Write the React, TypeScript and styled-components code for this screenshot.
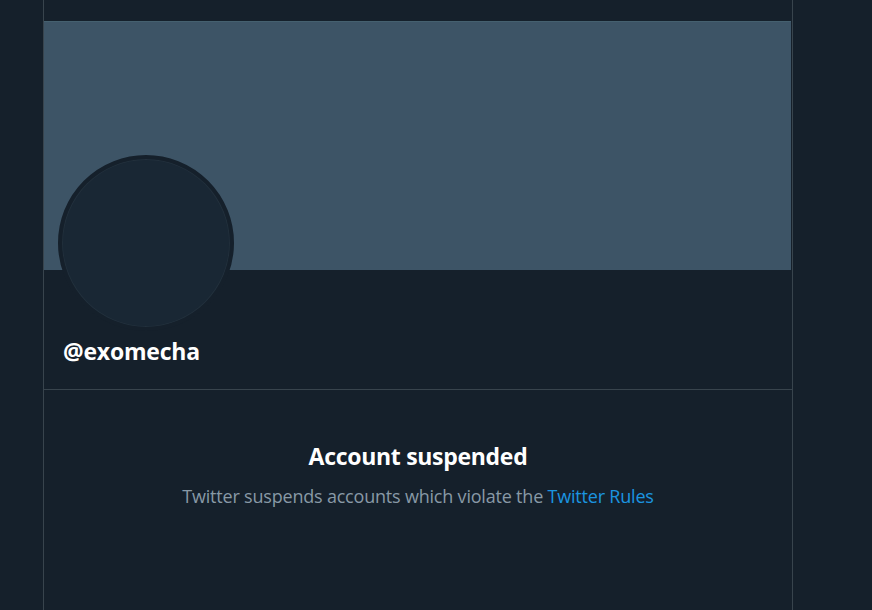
import styled, { createGlobalStyle } from 'styled-components'

const GlobalStyle = createGlobalStyle`
  html, body {
    margin: 0;
    padding: 0;
    height: 100%;
    background: #15202b;
  }
  #root {
    height: 100%;
  }
`

const Page = styled.div`
  height: 100vh;
  overflow: hidden;
  background: #15202b;
  font-family: 'Open Sans', 'Noto Sans', sans-serif;
  color: #fff;
`

const Column = styled.main`
  box-sizing: border-box;
  margin-left: 43px;
  width: 750px;
  height: 100%;
  padding-top: 21px;
  border-left: 1px solid #38444d;
  border-right: 1px solid #38444d;
  display: flex;
  flex-direction: column;
`

const Banner = styled.div`
  height: 249px;
  margin-right: 1px;
  background: #3d5466;
  border-top: 1px solid #45606f;
  box-sizing: border-box;
`

const ProfileHeader = styled.section`
  display: flex;
  flex-direction: column;
  align-items: flex-start;
  padding: 0 14px 23px;
  border-bottom: 1px solid #38444d;
`

const Avatar = styled.div<{ size: number }>`
  box-sizing: border-box;
  width: ${(p) => p.size}px;
  height: ${(p) => p.size}px;
  margin-top: -115px;
  border-radius: 50%;
  border: 4px solid #15202b;
  background: #192734;
  box-shadow: inset 0 0 0 1px #22303c;
`

const Handle = styled.h2`
  margin: 5px 0 0 5px;
  font-size: 23px;
  line-height: 30px;
  font-weight: 700;
  letter-spacing: -0.2px;
`

const Notice = styled.section`
  display: flex;
  flex-direction: column;
  align-items: center;
  padding-top: 51px;
  gap: 13px;
`

const NoticeTitle = styled.h1`
  margin: 0;
  font-size: 23px;
  line-height: 30px;
  font-weight: 700;
  letter-spacing: -0.3px;
`

const NoticeText = styled.p`
  margin: 0;
  font-size: 18px;
  line-height: 24px;
  letter-spacing: -0.2px;
  color: #8899a6;
`

const RulesLink = styled.a`
  color: #1b95e0;
  text-decoration: none;
`

export default function App() {
  return (
    <Page>
      <GlobalStyle />
      <Column>
        <Banner />
        <ProfileHeader>
          <Avatar size={176} />
          <Handle>@exomecha</Handle>
        </ProfileHeader>
        <Notice>
          <NoticeTitle>Account suspended</NoticeTitle>
          <NoticeText>
            Twitter suspends accounts which violate the{' '}
            <RulesLink href="#">Twitter Rules</RulesLink>
          </NoticeText>
        </Notice>
      </Column>
    </Page>
  )
}
